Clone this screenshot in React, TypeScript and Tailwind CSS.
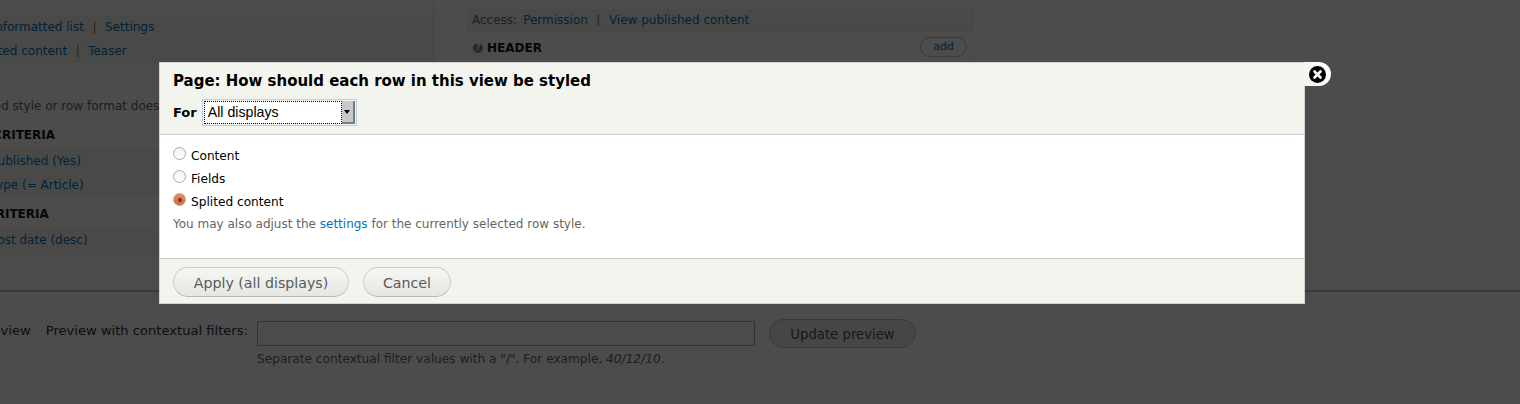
import React from "react";

const Sep = () => <span className="mx-[8.5px] text-[#a5672f]">|</span>;
const Link = ({ children }: { children: React.ReactNode }) => (
  <a className="text-[#0074bd]">{children}</a>
);

const LeftColumn = () => (
  <div className="w-[434px] shrink-0 overflow-hidden border-r border-[#ececec] h-[290px] text-[12px]">
    <div className="h-[15px]" />
    <div className="-ml-[65px] flex flex-col whitespace-nowrap">
      <div className="h-6 flex items-center bg-[#f6f6f2]">
        <span className="text-[#666] mr-[5px]">Format:</span>
        <Link>Unformatted list</Link>
        <Sep />
        <Link>Settings</Link>
      </div>
      <div className="h-6 flex items-center bg-[#f6f6f2] border-b border-[#eeeeee]">
        <span className="text-[#666] mr-[5px]">Show:</span>
        <Link>Splited content</Link>
        <Sep />
        <Link>Teaser</Link>
      </div>
      <div className="h-[31px]" />
      <div className="h-6 flex items-center border-b border-[#eeeeee] text-[#666] -ml-[3px]">
        The selected style or row format does not use fields
      </div>
      <div className="h-[31px] pt-[3px] flex items-center font-bold text-[#111] ml-[10px]">
        FILTER CRITERIA
      </div>
      <div className="h-6 flex items-center bg-[#f6f6f2]">
        <Link>Content: Published (Yes)</Link>
      </div>
      <div className="h-6 flex items-center bg-[#f6f6f2]">
        <Link>Content: Type (= Article)</Link>
      </div>
      <div className="mt-[5px] h-6 flex items-center font-bold text-[#111] ml-[12px]">
        SORT CRITERIA
      </div>
      <div className="h-[28px] flex items-center bg-[#f6f6f2] border-b border-[#eeeeee]">
        <Link>Content: Post date (desc)</Link>
      </div>
    </div>
  </div>
);

const RightColumn = () => (
  <div className="w-[540px] h-[290px] border-r border-[#ececec] pl-[32px] text-[12px]">
    <div className="h-[9px]" />
    <div className="h-[23px] flex items-center bg-[#f6f6f2] pl-[6px] border-b border-[#eeeeee] whitespace-nowrap">
      <span className="text-[#666] mr-[6px]">Access:</span>
      <Link>Permission</Link>
      <Sep />
      <Link>View published content</Link>
    </div>
    <div className="h-[30px] flex items-center justify-between pl-[7px] pr-[6px]">
      <div className="flex items-center gap-[4px] font-bold text-[#111] translate-y-[1px]">
        <span className="w-[10px] h-[10px] rounded-full bg-[#888] text-white text-[8px] leading-[10px] text-center">?</span>
        <span>HEADER</span>
      </div>
      <span className="h-5 w-[47px] rounded-full border border-[#bbb] text-[#0074bd] text-[11px] leading-[18px] text-center">add</span>
    </div>
  </div>
);

const Radio = ({ checked, label }: { checked?: boolean; label: string }) => (
  <div className="h-[23px] flex items-center gap-[5px]">
    {checked ? (
      <span className="w-[13px] h-[13px] rounded-full bg-gradient-to-b from-[#e98a63] to-[#e0623a] border border-[#c9a594] flex items-center justify-center -translate-y-[3px]">
        <span className="w-[4px] h-[4px] rounded-full bg-[#6b3320]" />
      </span>
    ) : (
      <span className="w-[13px] h-[13px] rounded-full border border-[#aaaaaa] bg-gradient-to-b from-[#f2f2f2] to-white -translate-y-[3px]" />
    )}
    <span className="text-black text-[12.15px]">{label}</span>
  </div>
);

const Dialog = () => (
  <div className="absolute left-[159px] top-[62px] w-[1146px] h-[242px] bg-white border border-[#d4d4d0] flex flex-col font-['DejaVu_Sans',sans-serif]">
    <div className="h-[72px] bg-[#f3f4ee] border-b border-[#cccccc] px-[13px] pt-[9px] shrink-0">
      <h1 className="text-[14.97px] leading-[19px] font-bold text-black">
        Page: How should each row in this view be styled
      </h1>
      <div className="flex items-center mt-[8px]">
        <span className="text-[13px] font-bold text-black mr-[5px]">For</span>
        <div className="w-[155px] h-[27px] border border-[#b5cfe9] p-[1px] flex">
          <div className="flex-1 bg-white border border-dotted border-black text-[14.2px] leading-[20px] pl-[3px] font-['Liberation_Sans',sans-serif] text-black">
            All displays
          </div>
          <div className="w-[13px] bg-[#c8c8c8] border-r-2 border-b-2 border-[#7a7a7a] flex items-center justify-center">
            <span className="w-0 h-0 border-l-[3px] border-r-[3px] border-t-[4px] border-l-transparent border-r-transparent border-t-black" />
          </div>
        </div>
      </div>
    </div>
    <div className="flex-1 px-[13px] pt-[10px]">
      <Radio label="Content" />
      <Radio label="Fields" />
      <Radio checked label="Splited content" />
      <p className="text-[12px] text-[#666] leading-[20px]">
        You may also adjust the <a className="text-[#0074bd]">settings</a> for the currently selected row style.
      </p>
    </div>
    <div className="h-[45px] bg-[#f3f4ee] border-t border-[#cccccc] px-[13px] pt-[2px] flex items-center gap-[14px] shrink-0">
      <button className="h-[30px] w-[176px] pt-[3px] rounded-full border border-[#cccccc] border-b-[#b8b8b8] bg-gradient-to-b from-[#f6f6f3] to-[#e6e6e4] text-[14.2px] text-[#5a5a5a]">
        Apply (all displays)
      </button>
      <button className="h-[30px] w-[88px] pt-[3px] rounded-full border border-[#cccccc] border-b-[#b8b8b8] bg-gradient-to-b from-[#f6f6f3] to-[#e6e6e4] text-[14.2px] text-[#5a5a5a]">
        Cancel
      </button>
    </div>
    <div className="absolute left-[1144px] -top-px w-[27px] h-[24px] bg-gradient-to-r from-[#f3f4ee] to-white rounded-r-[12px] flex items-center pl-[5px]">
      <span className="w-[17px] h-[17px] rounded-full bg-black flex items-center justify-center">
        <svg width="11" height="11" viewBox="0 0 11 11">
          <path d="M2.5 2.5 L8.5 8.5 M8.5 2.5 L2.5 8.5" stroke="#fff" strokeWidth="2.6" strokeLinecap="round" />
        </svg>
      </span>
    </div>
  </div>
);

export default function App() {
  return (
    <div className="relative w-[1520px] h-[404px] overflow-hidden bg-white text-[13px] font-['DejaVu_Sans',sans-serif]">
      <div className="flex border-b-2 border-[#bbbbbb] h-[292px]">
        <LeftColumn />
        <RightColumn />
      </div>
      <div className="flex pt-[29px]">
        <div className="w-[257px] shrink-0 overflow-hidden h-[40px] pr-[9px] text-[13.1px]">
          <div className="flex justify-end whitespace-nowrap text-[#333] gap-[15px]">
            <span>Auto preview</span>
            <span>Preview with contextual filters:</span>
          </div>
        </div>
        <div className="w-[498px] shrink-0">
          <div className="h-[25px] border border-[#aaa]" />
          <p className="text-[12.15px] text-[#666] mt-[4px] whitespace-nowrap">
            Separate contextual filter values with a "/". For example, <em>40/12/10</em>.
          </p>
        </div>
        <button className="ml-[14px] -mt-[2px] w-[147px] h-[29px] pt-[2px] rounded-full border border-[#bbb] bg-[#ececec] text-[#555] text-[13.25px]">
          Update preview
        </button>
      </div>
      <div className="absolute inset-0 bg-black/70" />
      <Dialog />
    </div>
  );
}
